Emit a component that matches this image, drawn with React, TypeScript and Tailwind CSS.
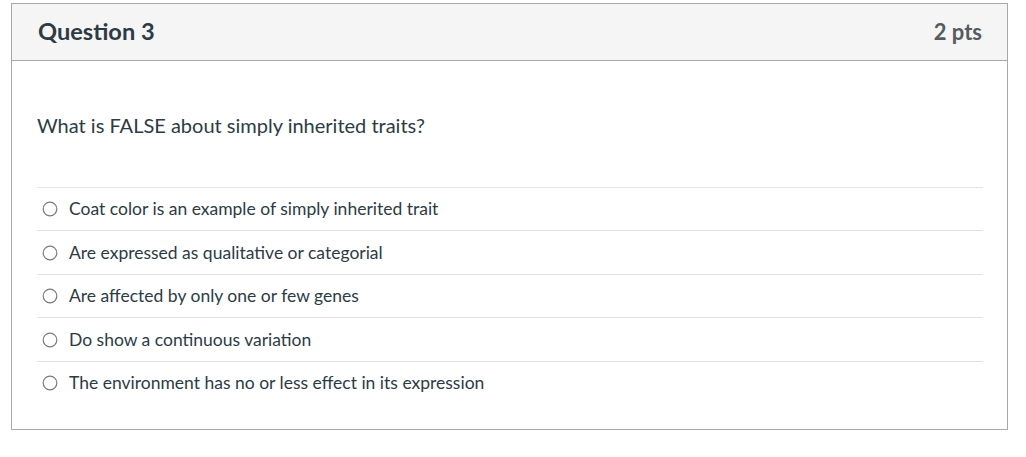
import React from "react";

const options = [
  "Coat color is an example of simply inherited trait",
  "Are expressed as qualitative or categorial",
  "Are affected by only one or few genes",
  "Do show a continuous variation",
  "The environment has no or less effect in its expression",
];

function Radio() {
  return (
    <svg width="16" height="16" viewBox="0 0 16 16" className="shrink-0">
      <circle cx="8" cy="8" r="6.8" fill="#fff" stroke="#7a7a7a" strokeWidth="1.2" />
    </svg>
  );
}

export default function App() {
  return (
    <div className="w-[1026px] h-[457px] bg-white pt-[3px] pl-[11px]" style={{ fontFamily: "Lato, 'Open Sans', sans-serif" }}>
      <div className="w-[997px] h-[427px] border border-[#a8a8a8] flex flex-col">
        <div className="h-[57px] shrink-0 bg-[#f5f5f5] border-b border-[#a8a8a8] flex items-center justify-between pl-[26px] pr-[25px]">
          <div className="text-[23.6px] font-bold text-[#2d3b45] leading-none mt-[-1px]">Question 3</div>
          <div className="text-[22px] font-bold text-[#555b60] leading-none mt-[-1px]">2 pts</div>
        </div>
        <div className="pl-[25px] pr-[24px]">
          <div className="h-[126px] pt-[51px] text-[20px] leading-[27px] text-[#2d3b45]">
            What is FALSE about simply inherited traits?
          </div>
          <div className="flex flex-col">
            {options.map((o, i) => (
              <div
                key={i}
                className={`flex items-center gap-[11px] pl-[5px] border-t border-[#e2e2e2] ${i % 2 === 0 ? "h-[43px]" : "h-[44px]"}`}
              >
                <Radio />
                <span className="text-[17.5px] text-[#2d3b45] leading-none">{o}</span>
              </div>
            ))}
          </div>
        </div>
      </div>
    </div>
  );
}
